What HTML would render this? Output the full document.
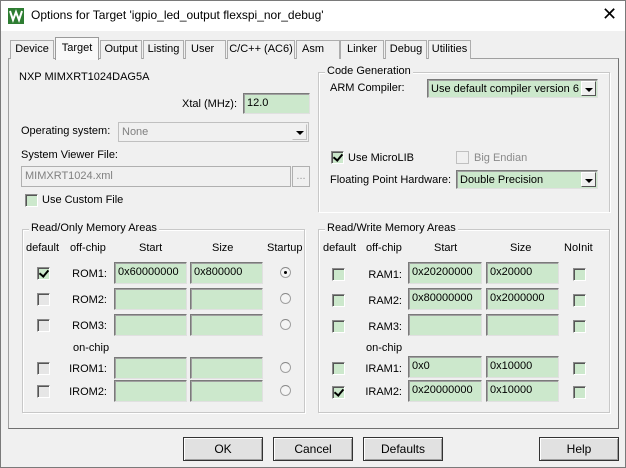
<!DOCTYPE html>
<html><head><meta charset="utf-8"><style>
*{box-sizing:border-box;margin:0;padding:0}
body{width:626px;height:468px;background:#f0f0f0;font-family:"Liberation Sans",sans-serif;font-size:11px;color:#000;position:relative;overflow:hidden}
.a{position:absolute;white-space:nowrap}
.win{position:absolute;left:0;top:0;width:626px;height:468px;border:1px solid #7a7a7a}
.title{position:absolute;left:1px;top:1px;width:624px;height:30px;background:#fff}
.tab{position:absolute;top:40px;height:19px;border:1px solid #adadad;border-bottom:none;background:#f0f0f0;text-align:center;line-height:17px;white-space:nowrap}
.tab.sel{top:37px;height:23px;background:#f9f9f9;z-index:2;border-color:#9a9a9a;line-height:20px}
.panel{position:absolute;left:8px;top:58px;width:611px;height:371px;border:1px solid #a0a0a0;border-right-color:#707070;border-bottom-color:#707070;background:#f0f0f0}
.ed{position:absolute;background:#cce8cc;border:1px solid;border-color:#7a7a7a #e0e0e0 #e0e0e0 #7a7a7a;box-shadow:inset 1px 1px 0 #a0a0a0;padding:1px 0 0 3px;line-height:16px;white-space:nowrap;overflow:hidden}
.grp{position:absolute;border:1px solid #c8c8c8;box-shadow:1px 1px 0 #fff, inset 1px 1px 0 #fff}
.gl{position:absolute;top:-8px;left:6px;background:#f0f0f0;padding:0 2px;white-space:nowrap}
.cb{position:absolute;width:13px;height:13px;border:1px solid;border-color:#8a8a8a #fff #fff #8a8a8a;box-shadow:inset 1px 1px 0 #555;background:#e6e6e6}
.cb.g{background:#cce8cc}
.cb.c::after{content:"";position:absolute;left:3px;top:0px;width:4px;height:7px;border:solid #000;border-width:0 2px 2px 0;transform:rotate(40deg)}
.rd{position:absolute;width:11px;height:11px;border-radius:50%;border:1px solid #a0a0a0;border-top-color:#888;background:#f4f4f4}
.rd.on::after{content:"";position:absolute;left:3px;top:3px;width:3px;height:3px;border-radius:50%;background:#000}
.dd{position:absolute;width:15px;top:1px;bottom:1px;right:1px;background:#f0f0f0;border:1px solid;border-color:#fff #555 #555 #fff}
.dd::after{content:"";position:absolute;left:3px;top:6px;border:4px solid transparent;border-top:4px solid #000;border-bottom:none}
.btn{position:absolute;top:437px;width:80px;height:24px;border:1px solid #333;background:#e1e1e1;box-shadow:inset 1px 1px 0 #fff,inset -1px -1px 0 #a0a0a0;text-align:center;line-height:22px;font-size:12px}
.r{text-align:right}
</style></head><body>
<div class="win"></div>
<div class="title"></div>
<svg class="a" style="left:8px;top:8px" width="16" height="16"><rect width="16" height="16" fill="#2e7d32"/><path d="M2 3 L5 12 L8 4 L11 12 L14 3" stroke="#fff" stroke-width="2" fill="none"/></svg>
<div class="a" style="left:31px;top:8px;font-size:12px">Options for Target 'igpio_led_output flexspi_nor_debug'</div>
<div class="a" style="left:602px;top:4px;font-size:18px;font-weight:300">✕</div>

<div class="panel"></div>
<div class="tab" style="left:10px;width:44px">Device</div>
<div class="tab sel" style="left:55px;width:44px">Target</div>
<div class="tab" style="left:100px;width:42px">Output</div>
<div class="tab" style="left:143px;width:41px">Listing</div>
<div class="tab" style="left:185px;width:41px;text-align:left;padding-left:5px">User</div>
<div class="tab" style="left:227px;width:68px">C/C++ (AC6)</div>
<div class="tab" style="left:296px;width:44px;text-align:left;padding-left:5px">Asm</div>
<div class="tab" style="left:340px;width:44px">Linker</div>
<div class="tab" style="left:385px;width:42px">Debug</div>
<div class="tab" style="left:428px;width:43px">Utilities</div>

<div class="a" style="left:19px;top:71px">NXP MIMXRT1024DAG5A</div>
<div class="a r" style="left:150px;top:98px;width:87px">Xtal (MHz):</div>
<div class="ed" style="left:243px;top:93px;width:67px;height:21px">12.0</div>
<div class="a" style="left:21px;top:125px">Operating system:</div>
<div class="ed" style="left:118px;top:122px;width:191px;height:20px;background:#f0f0f0;color:#808080;border-color:#c0c0c0;box-shadow:none">None<div class="dd" style="border-color:#f0f0f0 #c0c0c0 #c0c0c0 #f0f0f0"></div></div>
<div class="a" style="left:21px;top:149px">System Viewer File:</div>
<div class="ed" style="left:21px;top:166px;width:270px;height:21px;background:#f0f0f0;color:#808080;box-shadow:none;border-color:#b0b0b0">MIMXRT1024.xml</div>
<div class="a" style="left:292px;top:166px;width:18px;height:21px;border:1px solid #b0b0b0;color:#999;text-align:center;line-height:18px">...</div>
<div class="cb g" style="left:25px;top:194px"></div>
<div class="a" style="left:42px;top:194px">Use Custom File</div>

<div class="grp" style="left:318px;top:72px;width:292px;height:140px;border-bottom:none"><div class="gl">Code Generation</div></div>
<div class="a" style="left:330px;top:82px">ARM Compiler:</div>
<div class="ed" style="left:427px;top:79px;width:171px;height:19px">Use default compiler version 6<div class="dd"></div></div>
<div class="cb g c" style="left:331px;top:151px"></div>
<div class="a" style="left:348px;top:152px">Use MicroLIB</div>
<div class="cb" style="left:456px;top:151px;box-shadow:none;border-color:#c0c0c0;background:#f0f0f0"></div>
<div class="a" style="left:474px;top:152px;color:#8a8a8a">Big Endian</div>
<div class="a" style="left:330px;top:174px">Floating Point Hardware:</div>
<div class="ed" style="left:456px;top:170px;width:142px;height:19px">Double Precision<div class="dd"></div></div>

<div class="grp" style="left:22px;top:229px;width:283px;height:184px"><div class="gl">Read/Only Memory Areas</div></div>
<div class="a" style="left:26px;top:242px">default</div>
<div class="a" style="left:70px;top:242px">off-chip</div>
<div class="a" style="left:139px;top:242px">Start</div>
<div class="a" style="left:212px;top:242px">Size</div>
<div class="a" style="left:267px;top:242px">Startup</div>
<div class="cb g c" style="left:37px;top:267px"></div>
<div class="cb" style="left:37px;top:293px"></div>
<div class="cb" style="left:37px;top:319px"></div>
<div class="cb" style="left:37px;top:362px"></div>
<div class="cb" style="left:37px;top:385px"></div>
<div class="a r" style="left:60px;top:268px;width:47px">ROM1:</div>
<div class="a r" style="left:60px;top:294px;width:47px">ROM2:</div>
<div class="a r" style="left:60px;top:320px;width:47px">ROM3:</div>
<div class="a" style="left:73px;top:342px">on-chip</div>
<div class="a r" style="left:60px;top:363px;width:47px">IROM1:</div>
<div class="a r" style="left:60px;top:386px;width:47px">IROM2:</div>
<div class="ed" style="left:114px;top:262px;width:73px;height:22px">0x60000000</div>
<div class="ed" style="left:190px;top:262px;width:73px;height:22px">0x800000</div>
<div class="ed" style="left:114px;top:288px;width:73px;height:22px"></div>
<div class="ed" style="left:190px;top:288px;width:73px;height:22px"></div>
<div class="ed" style="left:114px;top:314px;width:73px;height:22px"></div>
<div class="ed" style="left:190px;top:314px;width:73px;height:22px"></div>
<div class="ed" style="left:114px;top:357px;width:73px;height:22px"></div>
<div class="ed" style="left:190px;top:357px;width:73px;height:22px"></div>
<div class="ed" style="left:114px;top:380px;width:73px;height:22px"></div>
<div class="ed" style="left:190px;top:380px;width:73px;height:22px"></div>
<div class="rd on" style="left:280px;top:267px"></div>
<div class="rd" style="left:280px;top:293px"></div>
<div class="rd" style="left:280px;top:319px"></div>
<div class="rd" style="left:280px;top:362px"></div>
<div class="rd" style="left:280px;top:385px"></div>

<div class="grp" style="left:318px;top:229px;width:292px;height:184px"><div class="gl">Read/Write Memory Areas</div></div>
<div class="a" style="left:323px;top:242px">default</div>
<div class="a" style="left:366px;top:242px">off-chip</div>
<div class="a" style="left:434px;top:242px">Start</div>
<div class="a" style="left:510px;top:242px">Size</div>
<div class="a" style="left:564px;top:242px">NoInit</div>
<div class="cb g" style="left:332px;top:268px"></div>
<div class="cb g" style="left:332px;top:294px"></div>
<div class="cb g" style="left:332px;top:320px"></div>
<div class="cb g" style="left:332px;top:362px"></div>
<div class="cb g c" style="left:332px;top:386px"></div>
<div class="a r" style="left:355px;top:269px;width:47px">RAM1:</div>
<div class="a r" style="left:355px;top:295px;width:47px">RAM2:</div>
<div class="a r" style="left:355px;top:321px;width:47px">RAM3:</div>
<div class="a" style="left:366px;top:342px">on-chip</div>
<div class="a r" style="left:355px;top:363px;width:47px">IRAM1:</div>
<div class="a r" style="left:355px;top:386px;width:47px">IRAM2:</div>
<div class="ed" style="left:408px;top:262px;width:74px;height:22px">0x20200000</div>
<div class="ed" style="left:486px;top:262px;width:73px;height:22px">0x20000</div>
<div class="ed" style="left:408px;top:288px;width:74px;height:22px">0x80000000</div>
<div class="ed" style="left:486px;top:288px;width:73px;height:22px">0x2000000</div>
<div class="ed" style="left:408px;top:314px;width:74px;height:22px"></div>
<div class="ed" style="left:486px;top:314px;width:73px;height:22px"></div>
<div class="ed" style="left:408px;top:356px;width:74px;height:22px">0x0</div>
<div class="ed" style="left:486px;top:356px;width:73px;height:22px">0x10000</div>
<div class="ed" style="left:408px;top:380px;width:74px;height:22px">0x20000000</div>
<div class="ed" style="left:486px;top:380px;width:73px;height:22px">0x10000</div>
<div class="cb g" style="left:573px;top:268px"></div>
<div class="cb g" style="left:573px;top:294px"></div>
<div class="cb g" style="left:573px;top:320px"></div>
<div class="cb g" style="left:573px;top:362px"></div>
<div class="cb g" style="left:573px;top:386px"></div>

<div class="btn" style="left:183px">OK</div>
<div class="btn" style="left:273px">Cancel</div>
<div class="btn" style="left:363px">Defaults</div>
<div class="btn" style="left:539px">Help</div>
</body></html>
